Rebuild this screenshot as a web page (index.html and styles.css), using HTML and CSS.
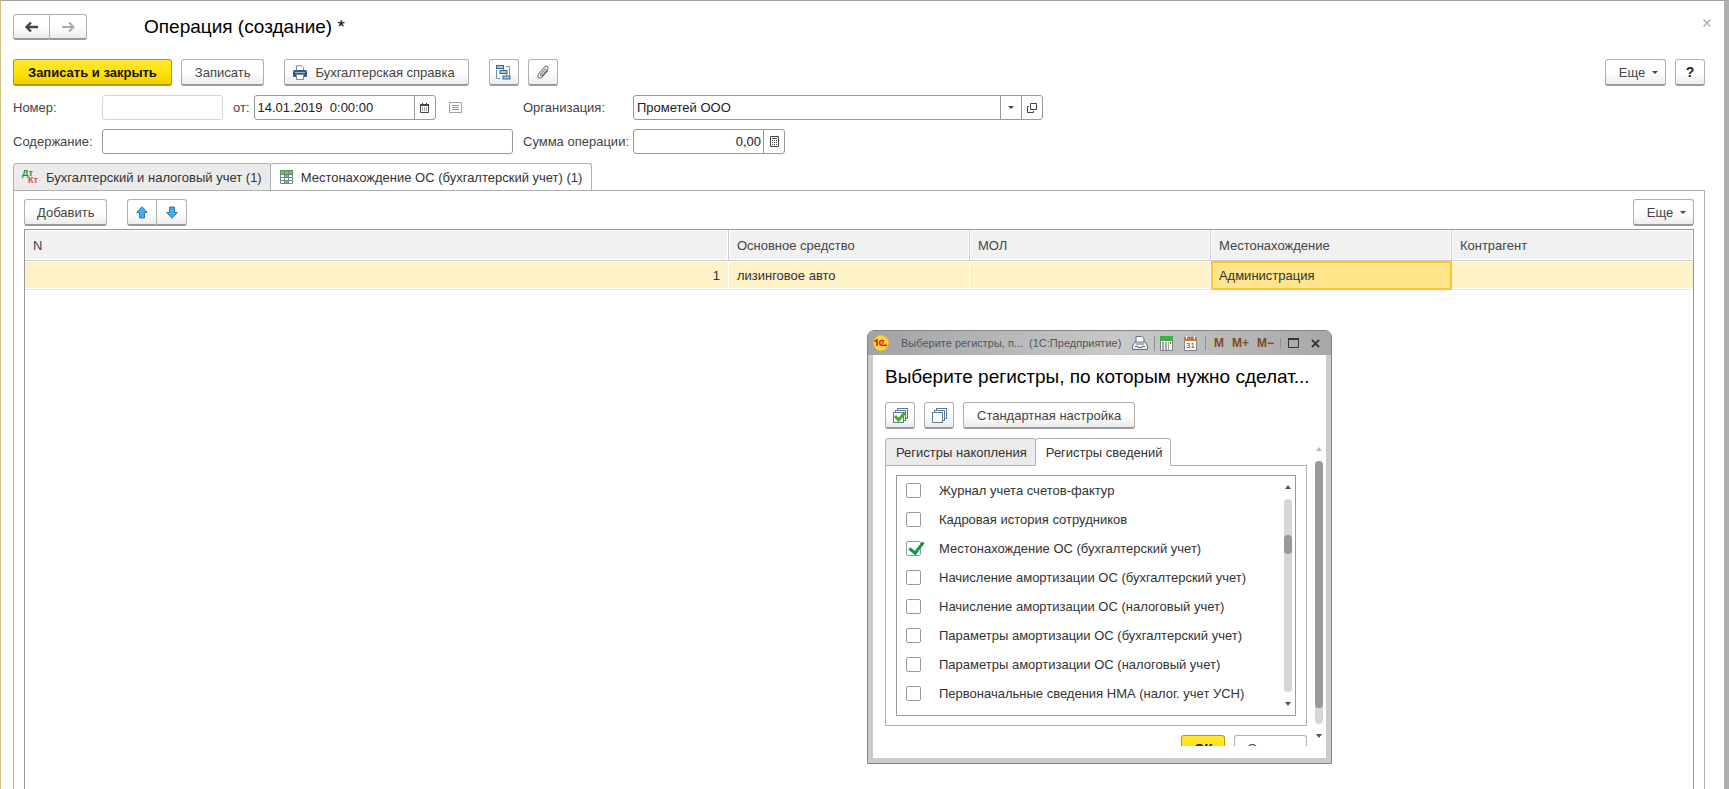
FILE: index.html
```html
<!DOCTYPE html>
<html lang="ru">
<head>
    <meta charset="UTF-8">
    <meta name="viewport" content="width=device-width, initial-scale=1.0">
    <title>Операция (создание)</title>
    <link rel="stylesheet" href="styles.css">
</head>
<body>
    <main class="window">
        <header class="title-row">
            <div class="btn-group">
                <button class="btn nav-btn" type="button" aria-label="Назад">
                    <svg width="14" height="12" viewBox="0 0 14 12"><path d="M1 6h12M6 1.500L1.500 6L6 10.500" fill="none" stroke="#444" stroke-width="2.400"/></svg>
                </button>
                <button class="btn nav-btn" type="button" aria-label="Вперед">
                    <svg width="14" height="12" viewBox="0 0 14 12"><path d="M1 6h12M8 1.500L12.500 6L8 10.500" fill="none" stroke="#aaa" stroke-width="2"/></svg>
                </button>
            </div>
            <h1>Операция (создание) *</h1>
            <button class="close" type="button" aria-label="Закрыть">
                <svg width="8" height="8" viewBox="0 0 8 8"><path d="M.5.500l7 7M7.500.500l-7 7" stroke="#aaa" stroke-width="1.200"/></svg>
            </button>
        </header>

        <div class="commands">
            <button class="btn primary" type="button">Записать и закрыть</button>
            <button class="btn" type="button">Записать</button>
            <button class="btn print" type="button">
                <svg width="14" height="15" viewBox="0 0 14 15"><path d="M3.500 6V.700h5l2 2V6" fill="#fff" stroke="#7890a5"/><rect y="5" width="14" height="7" rx="1.500" fill="#335c82"/><path d="M2 7.500h10" stroke="#9ab5ca"/><rect x="3.500" y="9.500" width="7" height="5" fill="#fff" stroke="#7890a5"/></svg>
                Бухгалтерская справка
            </button>
            <button class="btn square" type="button" aria-label="Структура">
                <svg width="15" height="15" viewBox="0 0 15 15"><path d="M10 1.500h3.500v9M4 13.500H.500V5M7.500 3.500v2M10.500 9v2" fill="none" stroke="#6f93b0"/><g fill="#a9c8e0" stroke="#356a98"><rect x=".5" y=".5" width="7" height="3"/><rect x="4" y="5.500" width="7" height="3"/><rect x="7" y="11" width="7" height="3"/></g></svg>
            </button>
            <button class="btn square" type="button" aria-label="Файлы">
                <svg width="14" height="14" viewBox="0 0 14 16"><path d="M10 4L4.500 10.500C3.600 12 5.200 13 6.300 11.800L12 5C14 2 11 0 8.800 2.300L2.400 9.700C-.5 13.500 3 16.500 6 13.500L12.500 6.500" fill="none" stroke="#707070" stroke-width="1.200"/></svg>
            </button>
            <button class="btn more" type="button">Еще <i class="caret"></i></button>
            <button class="btn square help" type="button">?</button>
        </div>

        <form class="fields">
            <label for="number">Номер:</label>
            <div class="date-line">
                <input class="field number" id="number" type="text" disabled>
                <label for="date">от:</label>
                <div class="field combo date">
                    <input id="date" type="text" value="14.01.2019  0:00:00">
                    <button type="button" aria-label="Выбрать дату">
                        <svg width="9" height="10" viewBox="0 0 9 10"><path d="M.5 2h8v7.500h-8z" fill="#fff" stroke="#444"/><path d="M0 1h9v2H0zM2 0h1v2H2zM6 0h1v2H6z" fill="#444"/><path d="M2 5h5M2 7h5" stroke="#444" stroke-dasharray="1 1"/></svg>
                    </button>
                </div>
                <svg class="list-icon" width="13" height="11" viewBox="0 0 13 11"><rect x=".5" y=".5" width="12" height="10" fill="#fff" stroke="#9aa7b5"/><path d="M3 3.500h7M3 5.500h7M3 7.500h7" stroke="#8795a5"/></svg>
            </div>
            <label for="org">Организация:</label>
            <div class="field combo">
                <input id="org" type="text" value="Прометей ООО">
                <button type="button" aria-label="Выбрать"><i class="caret"></i></button>
                <button type="button" aria-label="Открыть">
                    <svg width="10" height="10" viewBox="0 0 10 10"><path d="M3.500.500h6v6h-6zM2 3.500H.500v6h6V8" fill="none" stroke="#444"/></svg>
                </button>
            </div>
            <label for="content">Содержание:</label>
            <input class="field" id="content" type="text">
            <label for="sum">Сумма операции:</label>
            <div class="field combo sum">
                <input id="sum" type="text" value="0,00">
                <button type="button" aria-label="Калькулятор">
                    <svg width="9" height="11" viewBox="0 0 9 11"><path d="M.5.500h8v10h-8z" fill="#fff" stroke="#444"/><path d="M2 2.500h5" stroke="#444"/><path d="M2 4.500h5M2 6.500h5M2 8.500h5" stroke="#444" stroke-dasharray="1 1"/></svg>
                </button>
            </div>
        </form>

        <div class="tabs">
            <button class="tab" type="button">
                <span class="dtkt"><b>Дт</b><b class="kt">Кт</b></span>
                Бухгалтерский и налоговый учет (1)
            </button>
            <button class="tab active" type="button">
                <svg width="13" height="14" viewBox="0 0 13 14"><path d="M.5.500h12v13H.500z" fill="#fff"/><path d="M1 1h11v3H1zM5 5h3v2H5zM5 11h3v2H5z" fill="#7cc04c"/><path d="M.5.500h12v13H.500zM1 4.500h11M1 7.500h11M1 10.500h11M4.500 1v12M8.500 1v12" fill="none" stroke="#6f8795"/><path d="M0 .5h13" stroke="#4f9e35"/></svg>
                Местонахождение ОС (бухгалтерский учет) (1)
            </button>
        </div>
        <section class="panel">
            <div class="commands">
                <button class="btn add" type="button">Добавить</button>
                <div class="btn-group">
                    <button class="btn move" type="button" aria-label="Вверх">
                        <svg width="12" height="13" viewBox="0 0 12 13"><path d="M6 .700l5.300 5.800H8.500v5.500h-5V6.500H.700z" fill="#45aeee" stroke="#2a7fae"/></svg>
                    </button>
                    <button class="btn move" type="button" aria-label="Вниз">
                        <svg width="12" height="13" viewBox="0 0 12 13"><path d="M6 12.300L.700 6.500h2.800V1h5v5.500h2.800z" fill="#45aeee" stroke="#2a7fae"/></svg>
                    </button>
                </div>
                <button class="btn more" type="button">Еще <i class="caret"></i></button>
            </div>
            <div class="grid">
                <table>
                    <thead>
                        <tr><th class="col-n">N</th><th>Основное средство</th><th>МОЛ</th><th>Местонахождение</th><th>Контрагент</th></tr>
                    </thead>
                    <tbody>
                        <tr><td class="num">1</td><td>лизинговое авто</td><td></td><td class="current">Администрация</td><td></td></tr>
                    </tbody>
                </table>
            </div>
        </section>
    </main>

    <div class="dialog" role="dialog" aria-labelledby="dialog-title">
        <div class="titlebar">
            <svg width="16" height="16" viewBox="0 0 16 16"><circle cx="8" cy="8" r="7.500" fill="#ffdc3c" stroke="#e9bd2c"/><path d="M1.500 6.500L4 5v6M11 6.500C10 4.800 6.500 5 6.500 8C6.500 10.500 8.500 10.300 14 10.300M10.500 8h-2" fill="none" stroke="#d9201a" stroke-width="1.700"/></svg>
            <span class="caption">Выберите регистры, п...</span>
            <span class="app">(1С:Предприятие)</span>
            <button type="button" class="tool-print" aria-label="Печать">
                <svg width="16" height="14" viewBox="0 0 16 14"><path d="M4 6V.500h5.500l2.500 2V6" fill="#fff" stroke="#66717c"/><path d="M3 6h10l2.500 4v3.500H.500V10z" fill="#eef1f4" stroke="#66717c"/><path d="M3 10.500h3v1h4v-1h3M4 8h8" fill="none" stroke="#66717c"/></svg>
            </button>
            <button type="button" class="tool-calc" aria-label="Калькулятор">
                <svg width="13" height="15" viewBox="0 0 13 15"><path d="M.5.500h12v14H.500z" fill="#f5f5f5" stroke="#78838c"/><path d="M0 0h13v5H0z" fill="#3eae4c"/><path d="M2 7h7M2 9h7M2 11h7M2 13h7" stroke="#555" stroke-dasharray="2 1"/><path d="M10 7h1" stroke="#e02020" stroke-width="2"/></svg>
            </button>
            <button type="button" class="tool-calendar" aria-label="Календарь">
                <svg width="13" height="15" viewBox="0 0 13 15"><path d="M.5 2.500h12v12H.500z" fill="#fff" stroke="#78838c"/><path d="M0 1h13v4H0z" fill="#c5763c"/><path d="M2.500 0v3M10.500 0v3" stroke="#fff"/><text x="2" y="12" font-family="Liberation Sans, sans-serif" font-size="8" fill="#444">31</text></svg>
            </button>
            <button type="button" class="mem mem-first">M</button>
            <button type="button" class="mem">M+</button>
            <button type="button" class="mem">M−</button>
            <button type="button" class="tool-max" aria-label="Развернуть">
                <svg width="11" height="10" viewBox="0 0 11 10"><path d="M.5 1h10v8.500H.500z" fill="none" stroke="#333"/><path d="M0 1h11" stroke="#333" stroke-width="2"/></svg>
            </button>
            <button type="button" class="tool-close" aria-label="Закрыть">
                <svg width="9" height="9" viewBox="0 0 10 10"><path d="M1 1l8 8M9 1L1 9" stroke="#333" stroke-width="2"/></svg>
            </button>
        </div>
        <div class="dialog-body">
            <div class="dialog-content">
                <h2 id="dialog-title">Выберите регистры, по которым нужно сделат...</h2>
                <div class="commands">
                    <button class="btn square" type="button" aria-label="Установить флажки">
                        <svg width="15" height="15" viewBox="0 0 15 15"><g fill="#fff" stroke="#5c7a94"><rect x="4.500" y=".5" width="10" height="10"/><rect x="2.500" y="2.500" width="10" height="10"/><rect x=".5" y="4.500" width="10" height="10"/></g><path d="M2 8l3.500 4L12 4.500" fill="none" stroke="#47ad20" stroke-width="3"/></svg>
                    </button>
                    <button class="btn square" type="button" aria-label="Снять флажки">
                        <svg width="15" height="15" viewBox="0 0 15 15"><g fill="#fff" stroke="#5c7a94"><rect x="4.500" y=".5" width="10" height="10"/><rect x="2.500" y="2.500" width="10" height="10"/><rect x=".5" y="4.500" width="10" height="10"/></g></svg>
                    </button>
                    <button class="btn" type="button">Стандартная настройка</button>
                </div>
                <div class="tabs">
                    <button class="tab" type="button">Регистры накопления</button>
                    <button class="tab active" type="button">Регистры сведений</button>
                </div>
                <div class="panel">
                    <div class="list">
                        <div class="items">
                            <label><input type="checkbox">Журнал учета счетов-фактур</label>
                            <label><input type="checkbox">Кадровая история сотрудников</label>
                            <label><input type="checkbox" checked>Местонахождение ОС (бухгалтерский учет)</label>
                            <label><input type="checkbox">Начисление амортизации ОС (бухгалтерский учет)</label>
                            <label><input type="checkbox">Начисление амортизации ОС (налоговый учет)</label>
                            <label><input type="checkbox">Параметры амортизации ОС (бухгалтерский учет)</label>
                            <label><input type="checkbox">Параметры амортизации ОС (налоговый учет)</label>
                            <label><input type="checkbox">Первоначальные сведения НМА (налог. учет УСН)</label>
                        </div>
                        <div class="scroll">
                            <i class="arrow up"></i>
                            <div class="track"><div class="thumb"></div></div>
                            <i class="arrow down"></i>
                        </div>
                    </div>
                </div>
                <div class="dialog-footer">
                    <button class="btn primary" type="button">ОК</button>
                    <button class="btn" type="button">Отмена</button>
                </div>
            </div>
            <div class="scroll outer">
                <i class="arrow up off"></i>
                <div class="track"><div class="thumb"></div></div>
                <i class="arrow down"></i>
            </div>
        </div>
    </div>
</body>
</html>
```
FILE: styles.css
```css
* {
    box-sizing: border-box;
}
body {
    margin: 0;
    height: 100vh;
    overflow: hidden;
    font-family: "Liberation Sans", Arial, sans-serif;
    font-size: 13px;
    color: #444;
    background-color: #fff;
}
button, input {
    font: inherit;
    color: inherit;
}
button {
    padding: 0;
    border: none;
    background: none;
}
h1, h2 {
    margin: 0;
    font-size: 19px;
    font-weight: normal;
    color: #000;
}
svg {
    display: block;
    flex: none;
}
.window {
    display: flex;
    flex-direction: column;
    height: 100vh;
    padding: 13px 19px 0 12px;
    border-top: 1px solid #a0a0a0;
    border-left: 1px solid #cfc088;
    border-right: 5px solid #b0b0b0;
}

/* buttons */
.btn {
    display: flex;
    align-items: center;
    justify-content: center;
    height: 27px;
    padding: 0 13px;
    border: 1px solid #b0b0b0;
    border-bottom: 2px solid #999;
    border-radius: 3px;
    background: linear-gradient(#fff 50%, #ececec);
    white-space: nowrap;
}
.btn.primary {
    padding: 0 14px;
    font-weight: bold;
    color: #111;
    border-color: #b89b00;
    background: linear-gradient(#ffe838, #ffdf00 60%, #eed000);
}
.btn.square {
    width: 30px;
    padding: 0;
}
.btn.more {
    width: 61px;
    margin-left: auto;
    padding: 0 0 0 6px;
    gap: 7px;
}
.btn.help {
    font-weight: bold;
    font-size: 14px;
    color: #222;
}
.btn.print {
    gap: 8px;
    padding: 0 13px 0 8px;
    margin: 0 11px;
}
.btn.add {
    padding: 0 12px;
}
.btn-group {
    display: flex;
}
.btn-group .btn:first-child {
    border-radius: 3px 0 0 3px;
}
.btn-group .btn:last-child {
    border-left: none;
    border-radius: 0 3px 3px 0;
}
.nav-btn {
    width: 37px;
    height: 26px;
    padding: 0;
}
.btn.move {
    width: 30px;
    padding: 0;
}
.caret {
    border: 3px solid transparent;
    border-top-color: #444;
    border-bottom: none;
}
.commands {
    display: flex;
    gap: 9px;
}

/* header */
.title-row {
    display: flex;
    align-items: center;
    height: 26px;
    margin-bottom: 19px;
}
.title-row h1 {
    margin-left: 57px;
}
.title-row .close {
    margin-left: auto;
    margin-right: -6px;
    padding-bottom: 8px;
}

/* fields */
.fields {
    display: grid;
    grid-template-columns: 79px 411px 100px 410px;
    column-gap: 10px;
    row-gap: 9px;
    align-items: center;
    margin: 9px 0;
    white-space: nowrap;
}
.field {
    width: 100%;
    height: 25px;
    padding: 0 3px;
    border: 1px solid #999;
    border-radius: 3px;
    background-color: #fff;
    outline: none;
}
.number {
    width: 121px;
    border-color: #d4d4d4;
}
.date-line {
    display: flex;
    align-items: center;
}
.date-line label {
    margin: 0 4px 0 10px;
}
.combo {
    display: flex;
    padding: 0;
}
.combo input {
    flex: 1;
    min-width: 0;
    padding: 0 3px;
    border: none;
    background: none;
    outline: none;
    color: #222;
    white-space: pre;
}
.combo button {
    display: flex;
    align-items: center;
    justify-content: center;
    width: 21px;
    border-left: 1px solid #999;
}
.date {
    width: 182px;
}
.sum {
    width: 152px;
}
.sum input {
    text-align: right;
    padding-right: 2px;
}
.list-icon {
    margin-left: 13px;
}

/* tabs */
.tabs {
    display: flex;
    margin-bottom: -1px;
}
.tab {
    display: flex;
    align-items: center;
    gap: 8px;
    height: 28px;
    padding: 0 9px;
    border: 1px solid #b0b0b0;
    border-radius: 3px 3px 0 0;
    background-color: #ebebeb;
    color: #333;
    white-space: nowrap;
}
.tab.active {
    margin-left: -1px;
    border-bottom-color: #fff;
    background-color: #fff;
}
.window > .tabs .tab {
    padding: 0 8px;
}
.window > .tabs .active {
    padding: 0 9px;
}
.dtkt {
    display: grid;
    width: 16px;
    font-size: 9px;
    line-height: 7px;
    text-align: left;
    color: #0a9448;
}
.dtkt .kt {
    text-align: right;
    color: #e04545;
}
.panel {
    border: 1px solid #b0b0b0;
}
.window > .panel {
    display: flex;
    flex-direction: column;
    flex: 1;
    padding: 8px 10px 0;
    border-bottom: none;
}
.window .panel .btn-group {
    margin-left: 11px;
}

/* table */
.grid {
    flex: 1;
    margin-top: 3px;
    border: 1px solid #999;
    border-bottom: none;
}
table {
    width: 100%;
    table-layout: fixed;
    border-collapse: separate;
    border-spacing: 0;
}
th {
    height: 31px;
    padding: 0 8px;
    font-weight: normal;
    text-align: left;
    background-color: #f1f1f1;
    border-right: 1px solid #ccc;
    border-bottom: 1px solid #ccc;
    box-shadow: inset 0 0 0 1px #fff;
}
.col-n {
    width: 42.200%;
}
td {
    height: 29px;
    padding: 0 8px;
    color: #333;
    background-color: #fdf2c8;
    border-right: 1px solid #fff;
    border-bottom: 1px solid #e4e4e4;
    box-shadow: inset 0 1px #fff, inset 0 -1px #fff;
}
th:last-child, td:last-child {
    border-right: none;
}
.num {
    text-align: right;
}
td.current {
    padding: 0 6px;
    border: 2px solid #fbc72c;
    background-color: #ffe48c;
    box-shadow: none;
}

/* dialog */
.dialog {
    position: absolute;
    left: 867px;
    top: 330px;
    width: 465px;
    border: 1px solid #858585;
    border-radius: 7px 7px 0 0;
    padding: 0 5px 5px;
    background-color: #cbcbcb;
}
.titlebar {
    display: flex;
    align-items: center;
    height: 24px;
    margin: 0 -5px;
    padding: 0 11px 0 5px;
    border-radius: 6px 6px 0 0;
    background: linear-gradient(90deg, #a2a3a7, #c9c9c9 55%, #a6a7a9);
    font-size: 11px;
    color: #555;
    white-space: nowrap;
}
.caption {
    margin-left: 12px;
}
.app {
    margin-left: 6px;
}
.tool-print {
    margin-left: auto;
}
.tool-calc {
    margin-left: 6px;
    padding-left: 5px;
    border-left: 1px solid #909090;
}
.tool-calendar {
    margin-left: 11px;
}
.mem {
    margin-left: 8px;
    font-size: 12px;
    font-weight: bold;
    color: #804a22;
}
.mem-first {
    padding-left: 8px;
    border-left: 1px solid #909090;
}
.tool-max {
    margin-left: 6px;
    padding-left: 7px;
    border-left: 1px solid #909090;
}
.tool-close {
    margin-left: 12px;
}
.dialog-body {
    display: flex;
    height: 403px;
    padding: 12px 3px 12px 12px;
    background-color: #fff;
}
.dialog-content {
    flex: 1;
    min-width: 0;
    margin-right: -5px;
    padding-right: 5px;
    overflow: hidden;
}
.dialog h2 {
    height: 20px;
    margin-right: -5px;
    margin-bottom: 15px;
    line-height: 20px;
    white-space: nowrap;
}
.dialog .tabs {
    margin-top: 9px;
}
.dialog .tab {
    padding: 0 8px 0 10px;
}
.dialog .panel {
    padding: 9px 10px;
}
.list {
    display: flex;
    height: 241px;
    border: 1px solid #999;
}
.items {
    flex: 1;
}
.items label {
    display: flex;
    align-items: center;
    gap: 18px;
    height: 29px;
    padding-left: 9px;
    color: #333;
}
.items input {
    appearance: none;
    width: 15px;
    height: 15px;
    margin: 0;
    border: 1px solid #999;
    border-radius: 2px;
    background-color: #fff;
}
.items input:checked {
    position: relative;
}
.items input:checked::after {
    content: "";
    position: absolute;
    left: 5px;
    top: -3px;
    width: 6px;
    height: 12px;
    border: solid #0a9a48;
    border-width: 0 3px 3px 0;
    transform: rotate(38deg);
}
.scroll {
    display: flex;
    flex-direction: column;
    align-items: center;
    width: 8px;
    margin: 9px 3px 9px 0;
}
.arrow {
    border: 3px solid transparent;
}
.arrow.up {
    border-top: none;
    border-bottom: 4px solid #555;
}
.arrow.down {
    border-bottom: none;
    border-top: 4px solid #555;
}
.arrow.off {
    border-bottom-color: #bbb;
}
.track {
    flex: 1;
    width: 8px;
    margin: 10px 0;
    border-radius: 4px;
    background-color: #d6d6d6;
}
.thumb {
    height: 19px;
    margin-top: 36px;
    border-radius: 4px;
    background-color: #999;
}
.outer {
    margin: 80px 0 8px 8px;
}
.outer .thumb {
    height: 247px;
    margin-top: 0;
}
.dialog-footer {
    display: flex;
    justify-content: flex-end;
    gap: 9px;
    margin-top: 9px;
}
.dialog-footer .btn {
    padding: 0 12px;
}
```
